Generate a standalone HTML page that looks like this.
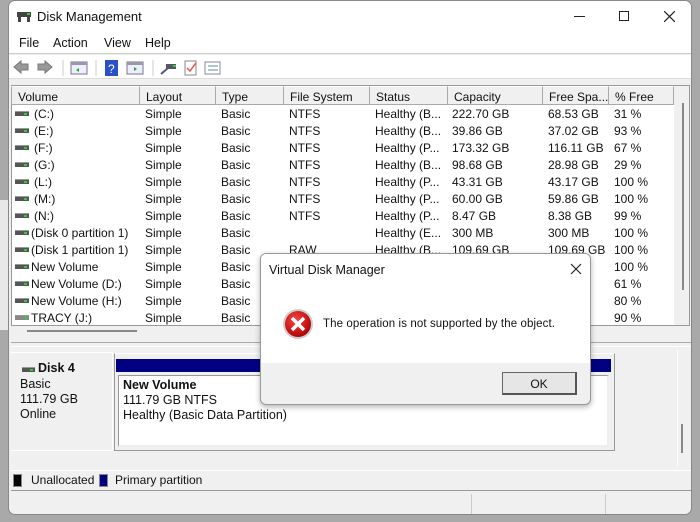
<!DOCTYPE html>
<html><head><style>
*{margin:0;padding:0;box-sizing:border-box}
body{width:700px;height:522px;background:#a9a9a9;font-family:"Liberation Sans",sans-serif;font-size:12px;color:#111;position:relative;overflow:hidden}
.a{position:absolute}
#win{position:absolute;left:8px;top:0;width:684px;height:515px;background:#f0f0f0;border:1px solid #888;border-radius:7px;overflow:hidden}
.hd{position:absolute;top:85px;height:19px;background:#f0f0f0;border:1px solid #aaa;border-top:1px solid #fff;padding:3px 0 0 6px;font-size:12px;white-space:nowrap;overflow:hidden}
.row{position:absolute;left:2px;height:17px;width:662px}
.row span{position:absolute;top:2px;white-space:nowrap}
.drv{position:absolute;left:4px;top:6px;width:14px;height:5px;background:#555;border-top:1px solid #999}
.drv:after{content:"";position:absolute;right:2px;top:1px;width:3px;height:2px;background:#3c3}
</style></head><body>
<div class="a" style="left:0;top:200px;width:8px;height:130px;background:#e8e8e8"></div>
<div id="win">
 <div class="a" style="left:0;top:0;width:684px;height:33px;background:#fff"></div>
 <svg class="a" style="left:7px;top:9px" width="16" height="14"><rect x="1" y="2" width="14" height="5" fill="#444"/><rect x="11" y="3" width="3" height="2" fill="#3c3"/><rect x="2" y="7" width="3" height="5" fill="#444"/><rect x="11" y="7" width="3" height="5" fill="#444"/></svg>
 <div class="a" style="left:28px;top:8px;font-size:13px">Disk Management</div>
 <div class="a" style="left:565px;top:15px;width:11px;height:1px;background:#222"></div>
 <div class="a" style="left:610px;top:10px;width:10px;height:10px;border:1px solid #222"></div>
 <svg class="a" style="left:655px;top:10px" width="11" height="11"><path d="M0 0L11 11M11 0L0 11" stroke="#222" stroke-width="1.2"/></svg>
 <div class="a" style="left:0;top:33px;width:684px;height:20px;background:#fff;border-bottom:1px solid #ccc"></div>
 <div class="a" style="left:10px;top:35px;font-size:12.5px">File</div>
 <div class="a" style="left:44px;top:35px;font-size:12.5px">Action</div>
 <div class="a" style="left:95px;top:35px;font-size:12.5px">View</div>
 <div class="a" style="left:136px;top:35px;font-size:12.5px">Help</div>
 <div class="a" style="left:0;top:54px;width:684px;height:24px;background:#fff;border-bottom:1px solid #ddd"></div>
 <svg class="a" style="left:4px;top:58px" width="210" height="18">
  <path d="M1 8L8 2V5H15V11H8V14Z" fill="#999" stroke="#777"/>
  <path d="M39 8L32 2V5H25V11H32V14Z" fill="#999" stroke="#777"/>
  <line x1="50" y1="1" x2="50" y2="17" stroke="#ccc"/>
  <rect x="58" y="3" width="16" height="12" fill="#eef" stroke="#778"/><rect x="58" y="3" width="16" height="3" fill="#99a"/><path d="M66 9L63 11L66 13Z" fill="#2a2"/>
  <line x1="83" y1="1" x2="83" y2="17" stroke="#ccc"/>
  <rect x="92" y="1" width="13" height="16" fill="#2b4fc8"/><text x="95" y="14" fill="#fff" font-size="12" font-family="Liberation Sans">?</text>
  <rect x="114" y="3" width="16" height="12" fill="#eef" stroke="#778"/><rect x="114" y="3" width="16" height="3" fill="#99a"/><path d="M121 8L124 10L121 12Z" fill="#2a2"/>
  <line x1="140" y1="1" x2="140" y2="17" stroke="#ccc"/>
  <path d="M148 15L155 9" stroke="#558" stroke-width="2"/><rect x="153" y="5" width="10" height="5" fill="#556"/><rect x="160" y="6" width="3" height="2" fill="#3c3"/>
  <rect x="172" y="2" width="11" height="14" fill="#fff" stroke="#888"/><path d="M174 9L177 12L183 4" stroke="#e55" stroke-width="1.5" fill="none"/>
  <rect x="192" y="3" width="15" height="12" fill="#fff" stroke="#889"/><path d="M195 7H205M195 11H205" stroke="#68a"/>
 </svg>
 <div class="a" style="left:2px;top:84px;width:679px;height:241px;background:#f0f0f0;border:1px solid #999"></div>
 <div class="a" style="left:3px;top:85px;width:662px;height:239px;background:#fff"></div>
 <div class="hd" style="left:2px;width:129px">Volume</div>
 <div class="hd" style="left:130px;width:77px">Layout</div>
 <div class="hd" style="left:206px;width:69px">Type</div>
 <div class="hd" style="left:274px;width:87px">File System</div>
 <div class="hd" style="left:360px;width:79px">Status</div>
 <div class="hd" style="left:438px;width:96px">Capacity</div>
 <div class="hd" style="left:533px;width:67px">Free Spa...</div>
 <div class="hd" style="left:599px;width:66px">% Free</div>
 <div class="a" style="left:673px;top:102px;width:2px;height:187px;background:#888"></div>
 <div id="rows"></div>
 <div class="a" style="left:18px;top:329px;width:110px;height:2px;background:#888"></div>
 <div class="a" style="left:2px;top:341px;width:681px;height:5px;border-top:1px solid #aaa;border-bottom:1px solid #fff"></div>
 <div class="a" style="left:2px;top:349px;width:667px;height:116px;background:#f0f0f0;border-right:1px solid #fff"></div>
 <div class="a" style="left:2px;top:351px;width:102px;height:99px;border:1px solid #fff;border-left:none"></div>
 <div class="drv" style="left:13px;top:366px;width:13px"></div>
 <div class="a" style="left:29px;top:360px;font-weight:bold;font-size:12.5px">Disk 4</div>
 <div class="a" style="left:11px;top:376px;line-height:15px;font-size:12.5px">Basic<br>111.79 GB<br>Online</div>
 <div class="a" style="left:105px;top:352px;width:501px;height:98px;border:1px solid #999;border-top:1px solid #fff"></div>
 <div class="a" style="left:107px;top:358px;width:495px;height:13px;background:#000080"></div>
 <div class="a" style="left:109px;top:374px;width:491px;height:72px;background:#fff;border:1px solid #999;border-right:2px solid #eee;border-bottom:2px solid #eee"></div>
 <div class="a" style="left:114px;top:377px;line-height:15px;font-size:12.5px"><b>New Volume</b><br>111.79 GB NTFS<br>Healthy (Basic Data Partition)</div>
 <div class="a" style="left:672px;top:423px;width:2px;height:29px;background:#888"></div>
 <div class="a" style="left:2px;top:469px;width:681px;height:21px;border-top:1px solid #fff;border-bottom:1px solid #999"></div>
 <div class="a" style="left:4px;top:473px;width:9px;height:13px;background:#000;border:1px solid #888"></div>
 <div class="a" style="left:22px;top:472px">Unallocated</div>
 <div class="a" style="left:90px;top:473px;width:9px;height:13px;background:#000080;border:1px solid #888"></div>
 <div class="a" style="left:106px;top:472px">Primary partition</div>
 <div class="a" style="left:462px;top:493px;width:1px;height:20px;background:#ccc"></div>
 <div class="a" style="left:596px;top:493px;width:1px;height:20px;background:#ccc"></div>
</div>
<div class="a" style="left:260px;top:253px;width:331px;height:152px;background:#f0f0f0;border:1px solid #999;border-radius:6px;box-shadow:0 2px 6px rgba(0,0,0,.3);overflow:hidden">
 <div class="a" style="left:0;top:0;width:331px;height:109px;background:#fff"></div>
 <div class="a" style="left:8px;top:9px;font-size:12.5px">Virtual Disk Manager</div>
 <svg class="a" style="left:309px;top:9px" width="12" height="12"><path d="M1 1L11 11M11 1L1 11" stroke="#222" stroke-width="1.2"/></svg>
 <svg class="a" style="left:21px;top:54px" width="32" height="32"><defs><radialGradient id="g" cx=".4" cy=".35" r=".7"><stop offset="0" stop-color="#f44"/><stop offset="1" stop-color="#a00"/></radialGradient></defs><circle cx="16" cy="16" r="15" fill="#ccc"/><circle cx="16" cy="16" r="13" fill="url(#g)"/><path d="M10 10L22 22M22 10L10 22" stroke="#fff" stroke-width="3.5"/></svg>
 <div class="a" style="left:62px;top:64px;font-size:11.5px;letter-spacing:.1px">The operation is not supported by the object.</div>
 <div class="a" style="left:241px;top:118px;width:75px;height:23px;background:#e6e6e6;border:1px solid #666;border-right:2px solid #555;border-bottom:2px solid #555;text-align:center;padding-top:4px">OK</div>
</div>
<script>
var d=[["(C:)","NTFS","Healthy (B...","222.70 GB","68.53 GB","31 %"],["(E:)","NTFS","Healthy (B...","39.86 GB","37.02 GB","93 %"],["(F:)","NTFS","Healthy (P...","173.32 GB","116.11 GB","67 %"],["(G:)","NTFS","Healthy (B...","98.68 GB","28.98 GB","29 %"],["(L:)","NTFS","Healthy (P...","43.31 GB","43.17 GB","100 %"],["(M:)","NTFS","Healthy (P...","60.00 GB","59.86 GB","100 %"],["(N:)","NTFS","Healthy (P...","8.47 GB","8.38 GB","99 %"],["(Disk 0 partition 1)","","Healthy (E...","300 MB","300 MB","100 %"],["(Disk 1 partition 1)","RAW","Healthy (B...","109.69 GB","109.69 GB","100 %"],["New Volume","","","","","100 %"],["New Volume (D:)","","","","","61 %"],["New Volume (H:)","","","","","80 %"],["TRACY (J:)","","","","","90 %"]];
var h="";d.forEach(function(r,i){var t=104+i*17;var vx=r[0][0]=="("&&r[0].length<6?23:20;
h+='<div class="row" style="top:'+t+'px"><div class="drv"'+(i==12?' style="background:#888"':'')+'></div><span style="left:'+vx+'px">'+r[0]+'</span><span style="left:134px">Simple</span><span style="left:210px">Basic</span><span style="left:278px">'+r[1]+'</span><span style="left:364px">'+r[2]+'</span><span style="left:441px">'+r[3]+'</span><span style="left:537px">'+r[4]+'</span><span style="left:603px">'+r[5]+'</span></div>';});
document.getElementById("rows").outerHTML=h;
</script>
</body></html>
